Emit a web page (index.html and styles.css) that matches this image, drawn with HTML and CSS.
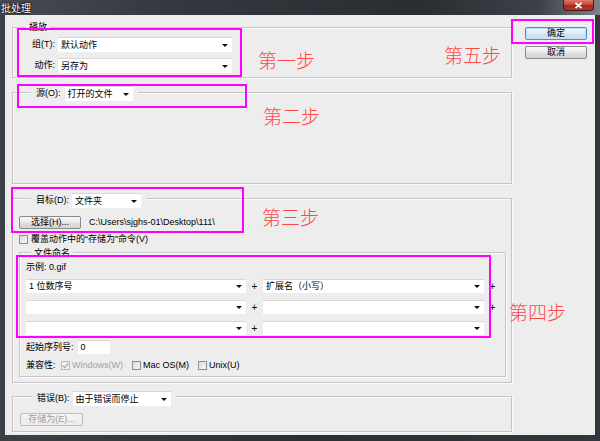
FILE: index.html
```html
<!DOCTYPE html>
<html lang="zh-CN">
<head>
<meta charset="utf-8">
<title>批处理</title>
<link rel="stylesheet" href="styles.css">
</head>
<body>
<div class="window">
  <div class="titlebar">
    <span class="title">批处理</span>
    <span class="close"><svg width="9" height="7" viewBox="0 0 9 7"><path d="M1.5 0.8 L7.5 6.2 M7.5 0.8 L1.5 6.2" stroke="#fff" stroke-width="1.8" fill="none"/></svg></span>
  </div>
  <div class="client">
    <div class="main">
      <div class="group g-play">
        <div class="legend legend-text l-play">播放</div>
        <div class="row r-first"><span class="lab lab-play">组(T):</span><div class="select w174"><span>默认动作</span><i class="tri"></i></div></div>
        <div class="row r-second"><span class="lab lab-play">动作:</span><div class="select w174"><span>另存为</span><i class="tri"></i></div></div>
      </div>

      <div class="group g-source">
        <div class="legend l-source"><span class="lab">源(O):</span><div class="select w68"><span>打开的文件</span><i class="tri"></i></div></div>
      </div>

      <div class="group g-dest">
        <div class="legend l-dest"><span class="lab">目标(D):</span><div class="select w69"><span>文件夹</span><i class="tri"></i></div></div>
        <div class="choose-row"><span class="btn w62">选择(H)...</span><span class="path">C:\Users\sjghs-01\Desktop\111\</span></div>
        <div class="check-row"><span class="cb"></span><span>覆盖动作中的“存储为”命令(V)</span></div>
        <div class="group g-naming">
          <div class="legend legend-text l-naming">文件命名</div>
          <div class="example">示例: 0.gif</div>
          <div class="name-rows">
            <div class="name-row"><div class="select w220"><span>1 位数序号</span><i class="tri"></i></div><span class="plus">+</span><div class="select w221"><span>扩展名（小写）</span><i class="tri"></i></div><span class="plus">+</span></div>
            <div class="name-row"><div class="select w220"><span></span><i class="tri"></i></div><span class="plus">+</span><div class="select w221"><span></span><i class="tri"></i></div><span class="plus">+</span></div>
            <div class="name-row"><div class="select w220"><span></span><i class="tri"></i></div><span class="plus">+</span><div class="select w221"><span></span><i class="tri"></i></div></div>
          </div>
          <div class="serial-row"><span class="lab">起始序列号:</span><span class="input">0</span></div>
          <div class="compat-row">
            <span class="lab lab-compat">兼容性:</span>
            <span class="opt disabled"><span class="cb checked"><svg width="7" height="7" viewBox="0 0 7 7"><path d="M0.8 3.6 L2.8 5.6 L6.3 1.2" stroke="#a9a9a9" stroke-width="1.3" fill="none"/></svg></span>Windows(W)</span>
            <span class="opt"><span class="cb"></span>Mac OS(M)</span>
            <span class="opt"><span class="cb"></span>Unix(U)</span>
          </div>
        </div>
      </div>

      <div class="group g-error">
        <div class="legend l-error"><span class="lab">错误(B):</span><div class="select w98"><span>由于错误而停止</span><i class="tri"></i></div></div>
        <span class="btn w63 btn-disabled">存储为(E)...</span>
      </div>
    </div>
    <div class="buttons">
      <span class="btn btn-default">确定</span>
      <span class="btn">取消</span>
    </div>
  </div>

  <div class="mark m1"></div>
  <div class="mark m2"></div>
  <div class="mark m3"></div>
  <div class="mark m4"></div>
  <div class="mark m5"></div>
  <div class="step s1">第一步</div>
  <div class="step s2">第二步</div>
  <div class="step s3">第三步</div>
  <div class="step s4">第四步</div>
  <div class="step s5">第五步</div>
</div>
</body>
</html>
```

FILE: styles.css
```css
html, body {
  margin: 0;
  padding: 0;
}
body {
  background: #2c3036;
  font-family: "Liberation Sans", "Noto Sans CJK SC", sans-serif;
  font-size: 9px;
  line-height: 11px;
  color: #000;
}
.window {
  position: relative;
  width: 600px;
  height: 441px;
  background: linear-gradient(90deg, #3c4147, #2c3035 50%, #33373d);
  display: flex;
  flex-direction: column;
  overflow: hidden;
}
.titlebar {
  flex: none;
  height: 15px;
  display: flex;
  justify-content: space-between;
  align-items: flex-start;
  background: linear-gradient(90deg, #474c53 0%, #33383e 30%, #2a2e33 70%, #3d4248 90%, #7d8389 100%);
}
.title {
  margin: 2px 0 0 1px;
  font-family: "Noto Sans CJK SC", sans-serif;
  font-size: 10px;
  line-height: 11px;
  color: #f4f4f4;
  text-shadow: 0 0 2px #000, 0 0 3px #000;
}
.close {
  box-sizing: border-box;
  width: 31px;
  height: 11px;
  margin-right: 6px;
  display: flex;
  align-items: center;
  justify-content: center;
  background: linear-gradient(#e07a6c, #c4473a 45%, #a8281b 55%, #b5392b);
  border: 1px solid #4b1712;
  border-top: none;
  border-radius: 0 0 4px 4px;
}
.client {
  flex: none;
  box-sizing: border-box;
  height: 420px;
  margin: 0 5px;
  padding: 12px 0 0 7px;
  background: #ededed;
  display: flex;
  gap: 13px;
}
.main {
  width: 500px;
  flex: none;
  display: flex;
  flex-direction: column;
}
.group {
  box-sizing: border-box;
  border: 1px solid #c6c6c6;
  box-shadow: inset 1px 1px 0 #fafafa, 1px 1px 0 #fafafa;
  display: flex;
  flex-direction: column;
  align-items: flex-start;
}
.legend {
  background: #ededed;
  display: flex;
  align-items: center;
  gap: 4px;
  height: 15px;
  padding: 0 5px;
}
.legend-text {
  height: 13px;
  line-height: 13px;
  padding: 0 3px;
}
.lab {
  white-space: nowrap;
}
.select {
  box-sizing: border-box;
  height: 15px;
  background: #fff;
  border-top: 1px solid #d8d8d8;
  display: flex;
  align-items: center;
  justify-content: space-between;
  padding: 0 4px 0 3px;
  white-space: nowrap;
}
.tri {
  width: 0;
  height: 0;
  border-left: 3px solid transparent;
  border-right: 3px solid transparent;
  border-top: 3px solid #111;
}
.w174 { width: 174px; }
.w68 { width: 68px; }
.w69 { width: 69px; }
.w98 { width: 98px; }
.w220 { width: 220px; }
.w221 { width: 221px; }
.w62 { width: 62px; }
.w63 { width: 63px; }

/* group 1 */
.g-play {
  height: 51px;
}
.l-play {
  margin: -7px 0 3px 13px;
}
.row {
  display: flex;
  align-items: center;
  gap: 3px;
}
.r-second {
  margin-top: 6px;
}
.lab-play {
  width: 42px;
  text-align: right;
}

/* group 2 */
.g-source {
  height: 92px;
  margin-top: 14px;
}
.l-source {
  margin: -7px 0 0 18px;
}

/* group 3 */
.g-dest {
  height: 185px;
  margin-top: 14px;
  padding: 0 5px 0 6px;
}
.l-dest {
  margin: -6px 0 0 12px;
  gap: 3px;
}
.btn {
  box-sizing: border-box;
  height: 13px;
  border: 1px solid #8a8a8a;
  border-radius: 2px;
  background: linear-gradient(#f7f7f7, #ececec 48%, #dedede 52%, #d5d5d5);
  display: flex;
  align-items: center;
  justify-content: center;
  white-space: nowrap;
}
.choose-row {
  margin-top: 8px;
  display: flex;
  align-items: center;
  gap: 8px;
}
.path {
  white-space: nowrap;
}
.check-row {
  margin-top: 6px;
  height: 9px;
  display: flex;
  align-items: center;
  gap: 3px;
  white-space: nowrap;
}
.cb {
  box-sizing: border-box;
  width: 9px;
  height: 9px;
  border: 1px solid #8e8f8f;
  background: linear-gradient(135deg, #dcdcdc, #f6f6f6);
  display: flex;
  align-items: center;
  justify-content: center;
  flex: none;
}
.g-naming {
  align-self: stretch;
  height: 125px;
  margin-top: 8px;
  padding-left: 6px;
}
.l-naming {
  margin: -6px 0 0 5px;
}
.example {
  margin-top: 1px;
  line-height: 12px;
  white-space: nowrap;
}
.name-rows {
  margin-top: 6px;
  display: flex;
  flex-direction: column;
  gap: 7px;
}
.name-row {
  display: flex;
  align-items: center;
}
.name-row .select {
  height: 14px;
}
.plus {
  width: 17px;
  text-align: center;
  font-size: 10px;
}
.serial-row {
  margin-top: 5px;
  display: flex;
  align-items: center;
  gap: 4px;
}
.input {
  box-sizing: border-box;
  width: 32px;
  height: 14px;
  background: #fff;
  border-top: 1px solid #d8d8d8;
  padding-left: 3px;
  display: flex;
  align-items: center;
}
.compat-row {
  margin-top: 6px;
  height: 10px;
  display: flex;
  align-items: center;
  white-space: nowrap;
}
.lab-compat {
  width: 35px;
}
.opt {
  display: flex;
  align-items: center;
  gap: 2px;
  margin-right: 9px;
}
.disabled {
  color: #a3a3a3;
}
.cb.checked {
  border-color: #b8b8b8;
  background: #f1f1f1;
}

/* group 4 */
.g-error {
  height: 36px;
  margin-top: 13px;
  padding-left: 7px;
}
.l-error {
  margin: -6px 0 0 12px;
  gap: 3px;
}
.g-error .btn {
  margin-top: 7px;
}
.btn-disabled {
  color: #a0a0a0;
  border-color: #bdbdbd;
  background: linear-gradient(#f4f4f4, #ebebeb);
}

/* right buttons */
.buttons {
  width: 62px;
  flex: none;
  display: flex;
  flex-direction: column;
  gap: 6px;
}
.btn-default {
  border-color: #3597d3;
  box-shadow: inset 0 0 0 1px #b7e2f7;
  background: linear-gradient(#eef6fb, #e1eef6 48%, #d3e3ee 52%, #cfe0eb);
}

/* annotation overlays */
.mark {
  position: absolute;
  box-sizing: border-box;
  border: 2px solid #ff00ff;
}
.m1 { left: 17px; top: 28px; width: 225px; height: 49px; }
.m2 { left: 17px; top: 84px; width: 230px; height: 24px; }
.m3 { left: 11px; top: 187px; width: 233px; height: 46px; }
.m4 { left: 16px; top: 255px; width: 475px; height: 83px; }
.m5 { left: 511px; top: 19px; width: 83px; height: 25px; }

.step {
  position: absolute;
  font-family: "Noto Sans CJK SC", sans-serif;
  font-weight: 300;
  font-size: 19px;
  line-height: 19px;
  color: #ff4848;
  white-space: nowrap;
}
.s1 { left: 258px; top: 50px; }
.s2 { left: 263px; top: 106px; }
.s3 { left: 262px; top: 207px; }
.s4 { left: 509px; top: 302px; }
.s5 { left: 444px; top: 45px; }
```
